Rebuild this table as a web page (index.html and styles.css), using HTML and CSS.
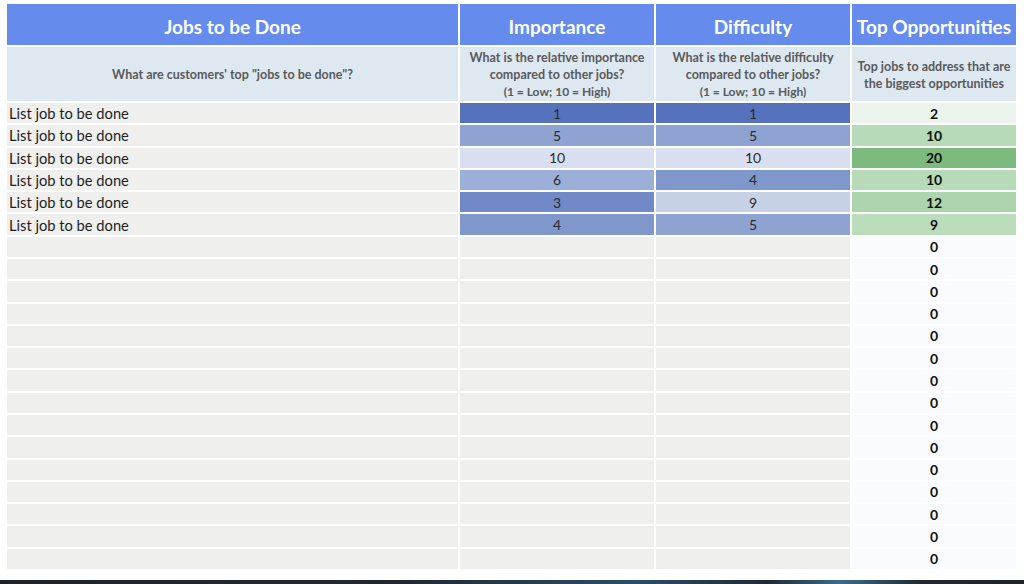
FILE: index.html
```html
<!DOCTYPE html>
<html>
<head>
<meta charset="utf-8">
<link rel="stylesheet" href="styles.css">
</head>
<body>
<div class="sheet">
  <div class="grid">
    <div class="hd">Jobs to be Done</div>
    <div class="hd">Importance</div>
    <div class="hd">Difficulty</div>
    <div class="hd">Top Opportunities</div>

    <div class="sub">What are customers' top "jobs to be done"?</div>
    <div class="sub"><span>What is the relative importance<br>compared to other jobs?</span><span class="small">(1 = Low; 10 = High)</span></div>
    <div class="sub"><span>What is the relative difficulty<br>compared to other jobs?</span><span class="small">(1 = Low; 10 = High)</span></div>
    <div class="sub">Top jobs to address that are<br>the biggest opportunities</div>

    <div class="job">List job to be done</div><div class="num b1">1</div><div class="num b1">1</div><div class="opp g2">2</div>
    <div class="job">List job to be done</div><div class="num b5">5</div><div class="num b5">5</div><div class="opp g10">10</div>
    <div class="job">List job to be done</div><div class="num b10">10</div><div class="num b10">10</div><div class="opp g20">20</div>
    <div class="job">List job to be done</div><div class="num b6">6</div><div class="num b4">4</div><div class="opp g10">10</div>
    <div class="job">List job to be done</div><div class="num b3">3</div><div class="num b9">9</div><div class="opp g12">12</div>
    <div class="job">List job to be done</div><div class="num b4">4</div><div class="num b5">5</div><div class="opp g9">9</div>

    <div class="job"></div><div class="num"></div><div class="num"></div><div class="opp">0</div>
    <div class="job"></div><div class="num"></div><div class="num"></div><div class="opp">0</div>
    <div class="job"></div><div class="num"></div><div class="num"></div><div class="opp">0</div>
    <div class="job"></div><div class="num"></div><div class="num"></div><div class="opp">0</div>
    <div class="job"></div><div class="num"></div><div class="num"></div><div class="opp">0</div>
    <div class="job"></div><div class="num"></div><div class="num"></div><div class="opp">0</div>
    <div class="job"></div><div class="num"></div><div class="num"></div><div class="opp">0</div>
    <div class="job"></div><div class="num"></div><div class="num"></div><div class="opp">0</div>
    <div class="job"></div><div class="num"></div><div class="num"></div><div class="opp">0</div>
    <div class="job"></div><div class="num"></div><div class="num"></div><div class="opp">0</div>
    <div class="job"></div><div class="num"></div><div class="num"></div><div class="opp">0</div>
    <div class="job"></div><div class="num"></div><div class="num"></div><div class="opp">0</div>
    <div class="job"></div><div class="num"></div><div class="num"></div><div class="opp">0</div>
    <div class="job"></div><div class="num"></div><div class="num"></div><div class="opp">0</div>
    <div class="job"></div><div class="num"></div><div class="num"></div><div class="opp">0</div>
  </div>
  <div class="taskbar"></div>
</div>
</body>
</html>
```

FILE: styles.css
```css
html, body {
  margin: 0;
  padding: 0;
  background: #ffffff;
}
body {
  width: 1024px;
  height: 584px;
  overflow: hidden;
  font-family: "Lato", "Liberation Sans", sans-serif;
}
.sheet {
  display: flex;
  flex-direction: column;
  height: 584px;
}
.grid {
  margin: 4px 0 0 7px;
  display: grid;
  grid-template-columns: 451px 194px 194px 164px;
  grid-template-rows: 41px 54px repeat(21, 20.2857px);
  gap: 2px;
}
.hd {
  background: #658bed;
  color: #ffffff;
  font-weight: bold;
  font-size: 19px;
  display: flex;
  align-items: center;
  justify-content: center;
  padding-top: 3px;
  box-sizing: border-box;
  white-space: nowrap;
}
.sub {
  background: #dde8f1;
  color: #5a5a5a;
  font-weight: bold;
  font-size: 12.5px;
  line-height: 17px;
  display: flex;
  flex-direction: column;
  align-items: center;
  justify-content: center;
  text-align: center;
  padding-top: 1px;
  box-sizing: border-box;
  white-space: nowrap;
}
.sub .small {
  font-size: 12px;
}
.job {
  background: #eff0ee;
  color: #1e1e1e;
  font-size: 14.7px;
  display: flex;
  align-items: center;
  padding-left: 2px;
  white-space: nowrap;
}
.num {
  background: #eff0ee;
  color: #2b2b2b;
  font-size: 14px;
  display: flex;
  align-items: center;
  justify-content: center;
}
.opp {
  background: #fafbfe;
  color: #111111;
  font-weight: bold;
  font-size: 14px;
  display: flex;
  align-items: center;
  justify-content: center;
}
.b1 { background: #5672bd; }
.b3 { background: #7189c6; }
.b4 { background: #8097cc; }
.b5 { background: #8fa3d2; }
.b6 { background: #9cafd8; }
.b9 { background: #c7d1e6; }
.b10 { background: #d9dfee; }
.g2 { background: #ebf4ec; }
.g9 { background: #bbddbc; }
.g10 { background: #b7dab8; }
.g12 { background: #acd5ae; }
.g20 { background: #7cba7e; }
.taskbar {
  margin-top: auto;
  height: 4px;
  background: linear-gradient(90deg, #1d2428 0%, #1e2a33 40%, #2b4d6a 62%, #1e2b35 75%, #3a6a8e 82%, #1e2a33 90%, #1d2428 100%);
}
```
